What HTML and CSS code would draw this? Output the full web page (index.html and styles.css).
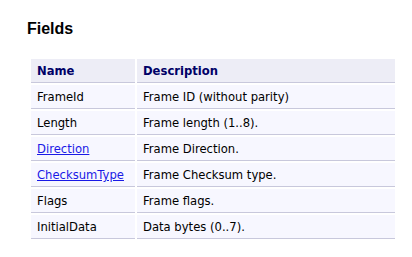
FILE: index.html
```html
<!DOCTYPE html>
<html>
<head>
<meta charset="utf-8">
<link rel="stylesheet" href="styles.css">
</head>
<body>
<div class="page">
  <h4 class="heading">Fields</h4>
  <table class="fields">
    <thead>
      <tr><th class="c-name">Name</th><th class="c-desc">Description</th></tr>
    </thead>
    <tbody>
      <tr><td>FrameId</td><td>Frame ID (without parity)</td></tr>
      <tr><td>Length</td><td>Frame length (1..8).</td></tr>
      <tr><td><a href="#">Direction</a></td><td>Frame Direction.</td></tr>
      <tr><td><a href="#">ChecksumType</a></td><td>Frame Checksum type.</td></tr>
      <tr><td>Flags</td><td>Frame flags.</td></tr>
      <tr><td>InitialData</td><td>Data bytes (0..7).</td></tr>
    </tbody>
  </table>
</div>
</body>
</html>
```

FILE: styles.css
```css
html, body {
  margin: 0;
  padding: 0;
  background: #ffffff;
}
.page {
  padding: 19px 0 0 27px;
  font-family: "DejaVu Sans", Verdana, sans-serif;
  font-size: 11.6px;
  color: #000000;
}
.heading {
  margin: 0 0 18px 0;
  font-family: "Liberation Sans", Arial, sans-serif;
  font-size: 16px;
  line-height: 20px;
  font-weight: bold;
  color: #000000;
}
.fields {
  margin-left: 2px;
  border-collapse: separate;
  border-spacing: 2px;
  width: 368px;
}
.fields th, .fields td {
  text-align: left;
  padding: 6px 6px 4px 6px;
  height: 13px;
  line-height: 13px;
  border-bottom: 1px solid #c8c8dc;
  background: #f7f7ff;
  white-space: nowrap;
}
.fields th {
  background: #ededf6;
  color: #000066;
  font-weight: bold;
}
.fields .c-name {
  width: 92px;
}
.fields a {
  color: #1a1ae6;
  text-decoration: underline;
}
```
